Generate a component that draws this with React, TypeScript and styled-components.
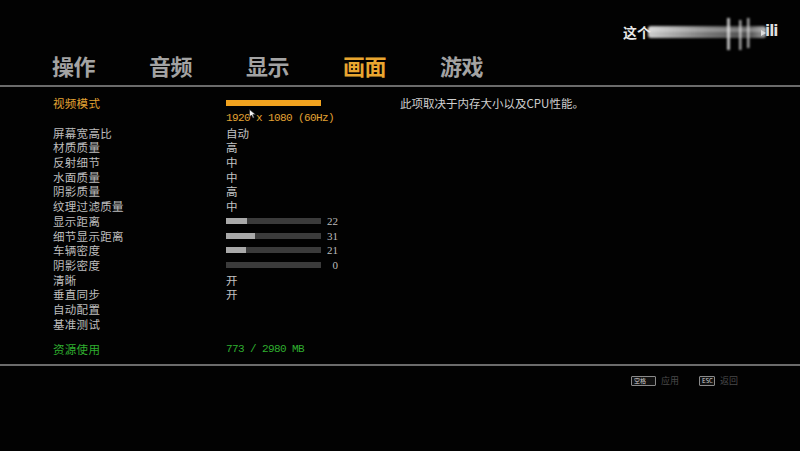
import React from "react";
import styled, { createGlobalStyle } from "styled-components";

const Global = createGlobalStyle`
  html, body { margin: 0; padding: 0; background: #000; }
  body { font-family: "Noto Sans CJK SC", "Noto Sans", sans-serif; }
`;

const CJK = `"Noto Sans CJK SC", "Noto Sans", sans-serif`;
const MONO = `"Liberation Mono", "DejaVu Sans Mono", monospace`;

const Page = styled.div`
  position: relative;
  width: 800px;
  height: 451px;
  background: #020202;
  overflow: hidden;
  display: flex;
  flex-direction: column;
`;

const TabBar = styled.nav`
  display: flex;
  align-items: flex-end;
  height: 85px;
  padding-left: 52px;
  box-sizing: border-box;
  padding-bottom: 7px;
  flex: none;
`;

const Tab = styled.div<{ $active?: boolean }>`
  width: 97px;
  font-family: ${CJK};
  font-size: 22px;
  font-weight: 700;
  line-height: 26px;
  letter-spacing: -0.5px;
  color: ${(p) => (p.$active ? "#e9a630" : "#a3a3a3")};
`;

const Divider = styled.div`
  height: 2px;
  background: #6b6b6b;
  flex: none;
`;

const Settings = styled.section`
  padding-top: 9px;
  height: 277px;
  box-sizing: border-box;
  display: flex;
  flex-direction: column;
  flex: none;
`;

const Row = styled.div<{ $gap?: number }>`
  display: grid;
  grid-template-columns: 226px 174px 1fr;
  height: 14.7px;
  align-items: center;
  margin-top: ${(p) => p.$gap ?? 0}px;
`;

const Label = styled.div<{ $tone?: "active" | "info" }>`
  padding-left: 53px;
  font-family: ${CJK};
  font-size: 11.5px;
  letter-spacing: 0.3px;
  line-height: 14px;
  white-space: nowrap;
  color: ${(p) =>
    p.$tone === "active" ? "#e3a233" : p.$tone === "info" ? "#2fae2f" : "#bdbdbd"};
`;

const Value = styled.div`
  position: relative;
  font-family: ${CJK};
  font-size: 11.5px;
  line-height: 14px;
  color: #c4c4c4;
  display: flex;
  align-items: center;
`;

const MonoValue = styled.div<{ $color: string }>`
  font-family: ${MONO};
  font-size: 11px;
  letter-spacing: -0.6px;
  line-height: 14px;
  color: ${(p) => p.$color};
  white-space: pre;
`;

const Description = styled.div`
  font-family: ${CJK};
  font-size: 11.5px;
  line-height: 14px;
  color: #cfcfcf;
  white-space: nowrap;
`;

const Track = styled.div<{ $active?: boolean }>`
  width: 95px;
  height: 6px;
  background: ${(p) => (p.$active ? "#f1a31f" : "#3b3b3b")};
  position: relative;
`;

const Fill = styled.div`
  position: absolute;
  left: 0;
  top: 0;
  bottom: 0;
  background: #a9a9a9;
`;

const Amount = styled.span`
  width: 17px;
  text-align: right;
  font-family: "Liberation Serif", "DejaVu Serif", serif;
  font-size: 11px;
  color: #bdbdbd;
`;

const Cursor = styled.svg`
  position: absolute;
  left: 23px;
  top: 9px;
`;

const Footer = styled.footer`
  display: flex;
  justify-content: flex-end;
  align-items: center;
  gap: 20px;
  padding: 10px 62px 0 0;
`;

const Hint = styled.div`
  display: flex;
  align-items: center;
  gap: 5px;
`;

const Key = styled.span<{ $w: number }>`
  width: ${(p) => p.$w}px;
  height: 10px;
  box-sizing: border-box;
  border: 1px solid #8a8a8a;
  border-radius: 1px;
  font-family: ${CJK};
  font-size: 6px;
  line-height: 8px;
  color: #d4d4d4;
  padding-left: 2px;
  background: #111;
`;

const HintText = styled.span`
  font-family: ${CJK};
  font-size: 9px;
  line-height: 10px;
  color: #4a4a4a;
`;

const Watermark = styled.div`
  position: absolute;
  left: 622px;
  top: 14px;
  width: 170px;
  height: 40px;
`;

const WatermarkText = styled.span`
  position: absolute;
  left: 1px;
  top: 8px;
  font-family: ${CJK};
  font-size: 14px;
  font-weight: 700;
  color: #e8e8e8;
`;

const WatermarkTail = styled.span`
  position: absolute;
  left: 143px;
  top: 8px;
  font-family: "DejaVu Sans", sans-serif;
  font-size: 15px;
  font-weight: 700;
  letter-spacing: -1px;
  color: #dedede;
`;

const Streak = styled.svg`
  position: absolute;
  left: 0;
  top: 0;
`;

type Setting =
  | { label: string; kind: "text"; value: string }
  | { label: string; kind: "slider"; value: number };

const settings: Setting[] = [
  { label: "屏幕宽高比", kind: "text", value: "自动" },
  { label: "材质质量", kind: "text", value: "高" },
  { label: "反射细节", kind: "text", value: "中" },
  { label: "水面质量", kind: "text", value: "中" },
  { label: "阴影质量", kind: "text", value: "高" },
  { label: "纹理过滤质量", kind: "text", value: "中" },
  { label: "显示距离", kind: "slider", value: 22 },
  { label: "细节显示距离", kind: "slider", value: 31 },
  { label: "车辆密度", kind: "slider", value: 21 },
  { label: "阴影密度", kind: "slider", value: 0 },
  { label: "清晰", kind: "text", value: "开" },
  { label: "垂直同步", kind: "text", value: "开" },
  { label: "自动配置", kind: "text", value: "" },
  { label: "基准测试", kind: "text", value: "" },
];

const tabs = ["操作", "音频", "显示", "画面", "游戏"];

export default function App() {
  return (
    <>
      <Global />
      <Page>
        <Watermark>
          <Streak width="170" height="40" viewBox="0 0 170 40">
            <defs>
              <linearGradient id="streakFade" x1="0" x2="1" y1="0" y2="0">
                <stop offset="0" stopColor="#f2f2f2" />
                <stop offset="0.5" stopColor="#8d8d8d" />
                <stop offset="0.85" stopColor="#5a5a5a" />
                <stop offset="1" stopColor="#bdbdbd" />
              </linearGradient>
              <filter id="soft" x="-10%" y="-50%" width="120%" height="200%">
                <feGaussianBlur stdDeviation="1.2" />
              </filter>
            </defs>
            <rect x="26" y="12" width="118" height="12" rx="3" fill="url(#streakFade)" filter="url(#soft)" opacity="0.85" />
            <rect x="26" y="14" width="118" height="4" fill="#fff" opacity="0.25" filter="url(#soft)" />
            <g filter="url(#soft)" fill="#e6e6e6">
              <rect x="105" y="4" width="3" height="32" opacity="0.8" />
              <rect x="117" y="6" width="2.5" height="30" opacity="0.7" />
              <rect x="125" y="4" width="2.5" height="30" opacity="0.7" />
            </g>
            <polygon points="139,16 144,19 139,22" fill="#dcdcdc" />
          </Streak>
          <WatermarkText>这个</WatermarkText>
          <WatermarkTail>ili</WatermarkTail>
        </Watermark>

        <TabBar>
          {tabs.map((t) => (
            <Tab key={t} $active={t === "画面"}>
              {t}
            </Tab>
          ))}
        </TabBar>
        <Divider />

        <Settings>
          <Row>
            <Label $tone="active">视频模式</Label>
            <Value>
              <Track $active />
              <Cursor width="8" height="10" viewBox="0 0 8 10">
                <path d="M0.5 0.5 L0.5 8 L2.5 6 L4 9 L5.2 8.4 L3.8 5.6 L6.5 5.5 Z" fill="#f4f4f4" stroke="#222" strokeWidth="0.6" />
              </Cursor>
            </Value>
            <Description>此项取决于内存大小以及CPU性能。</Description>
          </Row>
          <Row>
            <Label />
            <MonoValue $color="#e3a233">1920 x 1080 (60Hz)</MonoValue>
          </Row>
          {settings.map((s) => (
            <Row key={s.label}>
              <Label>{s.label}</Label>
              {s.kind === "text" ? (
                <Value>{s.value}</Value>
              ) : (
                <Value>
                  <Track>
                    <Fill style={{ width: `${Math.round((s.value / 100) * 95)}px` }} />
                  </Track>
                  <Amount>{s.value}</Amount>
                </Value>
              )}
            </Row>
          ))}
          <Row $gap={11}>
            <Label $tone="info">资源使用</Label>
            <MonoValue $color="#2fae2f">773 / 2980 MB</MonoValue>
          </Row>
        </Settings>
        <Divider />

        <Footer>
          <Hint>
            <Key $w={25}>空格</Key>
            <HintText>应用</HintText>
          </Hint>
          <Hint>
            <Key $w={16}>ESC</Key>
            <HintText>返回</HintText>
          </Hint>
        </Footer>
      </Page>
    </>
  );
}
